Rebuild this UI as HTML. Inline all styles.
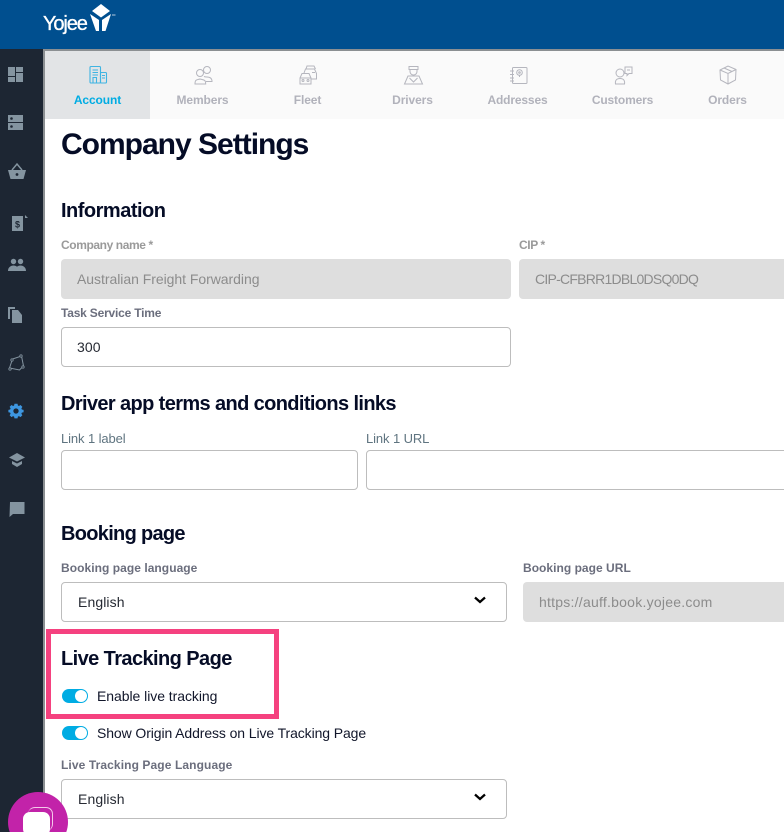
<!DOCTYPE html>
<html><head><meta charset="utf-8">
<style>
html,body{margin:0;padding:0;width:784px;height:832px;overflow:hidden;background:#fff;font-family:"Liberation Sans",sans-serif}
#p{position:relative;width:784px;height:832px;overflow:hidden;background:#fff}
.a{position:absolute}
.t{position:absolute;white-space:nowrap;line-height:1}
.box{position:absolute;box-sizing:border-box;border-radius:4px}
.in{border:1px solid #bdbdbd;background:#fff}
.dis{background:#dedede}
.h2{font-weight:700;font-size:20px;color:#050c26;letter-spacing:-.62px}
.lab{font-weight:700;font-size:12px;color:#6b6e7d;letter-spacing:.05px}
.lab.g{color:#9a9a9a;letter-spacing:-.4px}
.lab2{font-size:13px;color:#5f7480;letter-spacing:-.1px}
.val{font-size:14px;color:#8c8c8c;letter-spacing:-.04px}
.blk{font-size:14px;color:#262a33;letter-spacing:.1px}
.tab{font-weight:700;font-size:12px;color:#b1b2bb;letter-spacing:-.1px;text-align:center;width:105px}
.tog{position:absolute;left:62px;width:26px;height:14px;border-radius:7px;background:#00ace3}
.tog:after{content:"";position:absolute;right:1px;top:1px;width:12px;height:12px;border-radius:50%;background:#fff}
</style></head>
<body>
<div id="p">
<div class="a" style="left:0;top:0;width:784px;height:49px;background:#004f8f"></div>
<div class="t" style="left:43px;top:14px;font-size:20px;color:#fff;letter-spacing:-1.1px;-webkit-text-stroke:.35px #fff">Yojee</div>
<svg class="a" style="left:0;top:0" width="130" height="40" viewBox="0 0 130 40" fill="#fff">
<path d="M101 4l9 7-9 6.500-9-6.500z"/><path d="M90 14l9 6v11h-3z"/><path d="M111 14l-9 6v11h3.500z"/><rect x="112" y="14.500" width="3.500" height="1" opacity=".7"/></svg>

<div class="a" style="left:0;top:49px;width:784px;height:2px;background:#8b8f92"></div>
<div class="a" style="left:0;top:49px;width:43px;height:783px;background:#1d2633"></div>
<div class="a" style="left:43px;top:49px;width:2px;height:783px;background:#8b8f92"></div>
<div class="a" style="left:45px;top:51px;width:739px;height:68px;background:#fafafa"></div>
<div class="a" style="left:45px;top:51px;width:105px;height:68px;background:#e2e4e6"></div>

<!-- sidebar icons -->
<svg class="a" style="left:0;top:0" width="43" height="530" viewBox="0 0 43 530" fill="#8494a0">
<path d="M8 67h7v9H8zM16 67h7v5h-7zM16 73h7v9h-7zM8 77h7v5H8z"/>
<path d="M8 115h15v7H8zM8 123h15v7H8z"/><circle cx="11.500" cy="118.500" r="1.300" fill="#1d2633"/><circle cx="11.500" cy="126.500" r="1.300" fill="#1d2633"/>
<path d="M8 170h18l-2.500 9h-13z"/><path d="M12 170l5-6 5 6" fill="none" stroke="#8494a0" stroke-width="1.500"/><circle cx="17" cy="174.500" r="1.400" fill="#1d2633"/>
<path d="M12 216h11v15H12z"/><path d="M25 215l3 3h-3z"/>
<text x="17.500" y="227.500" font-family="Liberation Sans" font-size="9" font-weight="700" fill="#1d2633" text-anchor="middle">$</text>
<circle cx="13.500" cy="261.500" r="2.700"/><circle cx="20.500" cy="261.500" r="2.700"/><path d="M8 271c0-3.500 2.500-5.500 5.500-5.500 1.500 0 2.800.5 3.500 1.300.8-.8 2-1.300 3.500-1.300 3 0 5.500 2 5.500 5.500z"/>
<path d="M12 310h6l4 5v8H12z"/><path d="M8 307h7v2h-5v10H8z"/>
<path d="M9.500 368l3-9 9-3 2 10-4 4z" fill="none" stroke="#8494a0" stroke-width="1"/>
<g fill="#1d2633" stroke="#8494a0" stroke-width=".8"><circle cx="10" cy="369" r="1.200"/><circle cx="12" cy="360" r="1.200"/><circle cx="21" cy="356" r="1.200"/><circle cx="23" cy="367" r="1.200"/></g>
<path fill="#3d96e0" fill-rule="evenodd" d="M14 403h4l.5 2.300 1.400.6 2-1.300 2.500 2.500-1.300 2 .6 1.400 2.300.5v3.200l-2.300.5-.6 1.400 1.300 2-2.500 2.500-2-1.300-1.400.6-.5 2.300h-4l-.5-2.300-1.400-.6-2 1.300-2.500-2.500 1.300-2-.6-1.400-2.300-.5V411l2.300-.5.6-1.400-1.300-2 2.500-2.500 2 1.300 1.400-.6zM16 409a3.500 3.500 0 100 7 3.500 3.500 0 000-7z" transform="translate(16 411) scale(.76) translate(-16 -412.500)"/>
<path d="M17 453l8 4.500-8 4-8-4z"/><path d="M12 461l5 2.500 5-2.500v3l-5 3-5-3z"/>
<path d="M10 502h14.500v12H13l-3.500 3z"/>
</svg>

<!-- tabs -->
<svg class="a" style="left:0;top:0" width="784" height="90" viewBox="0 0 784 90" fill="none" stroke="#b5b6be" stroke-width="1">
<g stroke="#3fb4e2" stroke-width="1.100"><rect x="90" y="66.500" width="10.500" height="16.500" rx="1"/><rect x="100.500" y="72.500" width="6" height="10.500" rx="1"/><path d="M92.500 70h5.500M92.500 72.500h5.500M92.500 75h5.500M102 75.500h3M102 78h3M93 83v-5.500h3.500V83"/></g>
<g><circle cx="200" cy="73" r="3.500"/><circle cx="207" cy="70" r="3.500"/><path d="M195 84c0-1.500 0-3 1-3.700 1-.8 2.500-.8 4-1.300 2 .5 3.500.7 4.500 1.300 1 .7 1.200 2.200 1.200 3.700zM204 76.500c1 .5 2 .5 3 .5 2.500 0 5 1 5 4.500h-6"/></g>
<g><path d="M300 84v-6l2-4.500h7l2 4.500v6zM300 78h11"/><circle cx="303" cy="80.500" r="1"/><circle cx="308" cy="80.500" r="1"/><path d="M304 73l1.500-4h9l2 4.500V79h-5M306 69l1-3h7l1.500 3M312 72.500h3"/></g>
<g><path d="M409 66.500h9v3h-9zM410 69.500v2c0 2 1.500 3.500 3.500 3.500s3.500-1.500 3.500-3.500v-2M408 76l-3.500 8h18l-3.500-8zM409.500 78l4 4 4-4"/></g>
<g><rect x="512.500" y="67.500" width="14.500" height="16" rx="1"/><path d="M510 71h4M510 74.500h4M510 78h4M510 81h4"/><circle cx="519.500" cy="72.500" r="2.800"/><path d="M519.500 75.500v1.500"/><circle cx="519.500" cy="72.500" r=".8"/></g>
<g><circle cx="620" cy="73" r="4"/><path d="M615.500 84c-.5-3 .5-5.500 4.500-5.500s5 2.500 4.500 5.500z"/><path d="M625 67h7v6.500h-3l-2 2v-2h-2zM627 70h3"/></g>
<g><path d="M720 70l8-4 8 3.500-.5 10.500-7.500 4-7.500-4zM720 70l8 3.500 8-4M728 73.500V84M724 68l8 3.500"/></g>
</svg>
<div class="t tab" style="left:45px;top:94px;color:#00ace3">Account</div>
<div class="t tab" style="left:150px;top:94px">Members</div>
<div class="t tab" style="left:255px;top:94px">Fleet</div>
<div class="t tab" style="left:360px;top:94px">Drivers</div>
<div class="t tab" style="left:465px;top:94px;letter-spacing:-.15px">Addresses</div>
<div class="t tab" style="left:570px;top:94px;letter-spacing:-.15px">Customers</div>
<div class="t tab" style="left:675px;top:94px">Orders</div>

<div class="t" style="left:61px;top:130px;font-size:30px;font-weight:700;color:#050c26;letter-spacing:-1px">Company Settings</div>

<div class="t h2" style="left:61px;top:201px;letter-spacing:-.5px">Information</div>
<div class="t lab g" style="left:61px;top:239px">Company name *</div>
<div class="box dis" style="left:61px;top:259px;width:450px;height:40px"></div>
<div class="t val" style="left:77px;top:272px">Australian Freight Forwarding</div>
<div class="t lab g" style="left:519px;top:239px">CIP *</div>
<div class="box dis" style="left:519px;top:259px;width:275px;height:40px"></div>
<div class="t val" style="left:535px;top:272px;letter-spacing:-.75px">CIP-CFBRR1DBL0DSQ0DQ</div>
<div class="t lab" style="left:61px;top:307px;letter-spacing:-.2px">Task Service Time</div>
<div class="box in" style="left:61px;top:327px;width:450px;height:40px"></div>
<div class="t blk" style="left:77px;top:340px">300</div>

<div class="t h2" style="left:61px;top:394px">Driver app terms and conditions links</div>
<div class="t lab2" style="left:61px;top:432px">Link 1 label</div>
<div class="box in" style="left:61px;top:450px;width:297px;height:40px"></div>
<div class="t lab2" style="left:366px;top:432px">Link 1 URL</div>
<div class="box in" style="left:366px;top:450px;width:430px;height:40px"></div>

<div class="t h2" style="left:61px;top:524px;letter-spacing:-.7px">Booking page</div>
<div class="t lab" style="left:61px;top:562px;letter-spacing:.05px">Booking page language</div>
<div class="box in" style="left:61px;top:582px;width:446px;height:40px"></div>
<div class="t blk" style="left:78px;top:595px">English</div>
<svg class="a" style="left:473px;top:595px" width="14" height="10" viewBox="0 0 14 10"><path d="M2 2.500L7 7l5-4.500" fill="none" stroke="#000" stroke-width="2.300"/></svg>
<div class="t lab" style="left:523px;top:562px;letter-spacing:.03px">Booking page URL</div>
<div class="box dis" style="left:523px;top:582px;width:270px;height:40px"></div>
<div class="t val" style="left:539px;top:595px;letter-spacing:.24px">https://auff.book.yojee.com</div>

<div class="a" style="left:46px;top:629px;width:233px;height:90px;box-sizing:border-box;border:5px solid #f5417f"></div>
<div class="t h2" style="left:61px;top:649px;letter-spacing:-.58px">Live Tracking Page</div>
<div class="tog" style="top:689px"></div>
<div class="t" style="left:97px;top:689px;font-size:14px;color:#11162a;letter-spacing:-.05px">Enable live tracking</div>
<div class="tog" style="top:726px"></div>
<div class="t" style="left:97px;top:726px;font-size:14px;color:#11162a;letter-spacing:-.1px">Show Origin Address on Live Tracking Page</div>
<div class="t lab" style="left:61px;top:759px;letter-spacing:.1px">Live Tracking Page Language</div>
<div class="box in" style="left:61px;top:779px;width:446px;height:40px"></div>
<div class="t blk" style="left:78px;top:792px">English</div>
<svg class="a" style="left:473px;top:792px" width="14" height="10" viewBox="0 0 14 10"><path d="M2 2.500L7 7l5-4.500" fill="none" stroke="#000" stroke-width="2.300"/></svg>

<div class="a" style="left:8px;top:792px;width:60px;height:60px;border-radius:50%;background:#c223a9"></div>
<div class="a" style="left:28px;top:807px;width:25px;height:24px;box-sizing:border-box;border-radius:7px;border-top:1.500px solid #f3c9ea;border-right:1.500px solid #f3c9ea"></div>
<div class="a" style="left:23px;top:812px;width:27px;height:24px;border-radius:7px;background:#fff"></div>
</div>
</body></html>
